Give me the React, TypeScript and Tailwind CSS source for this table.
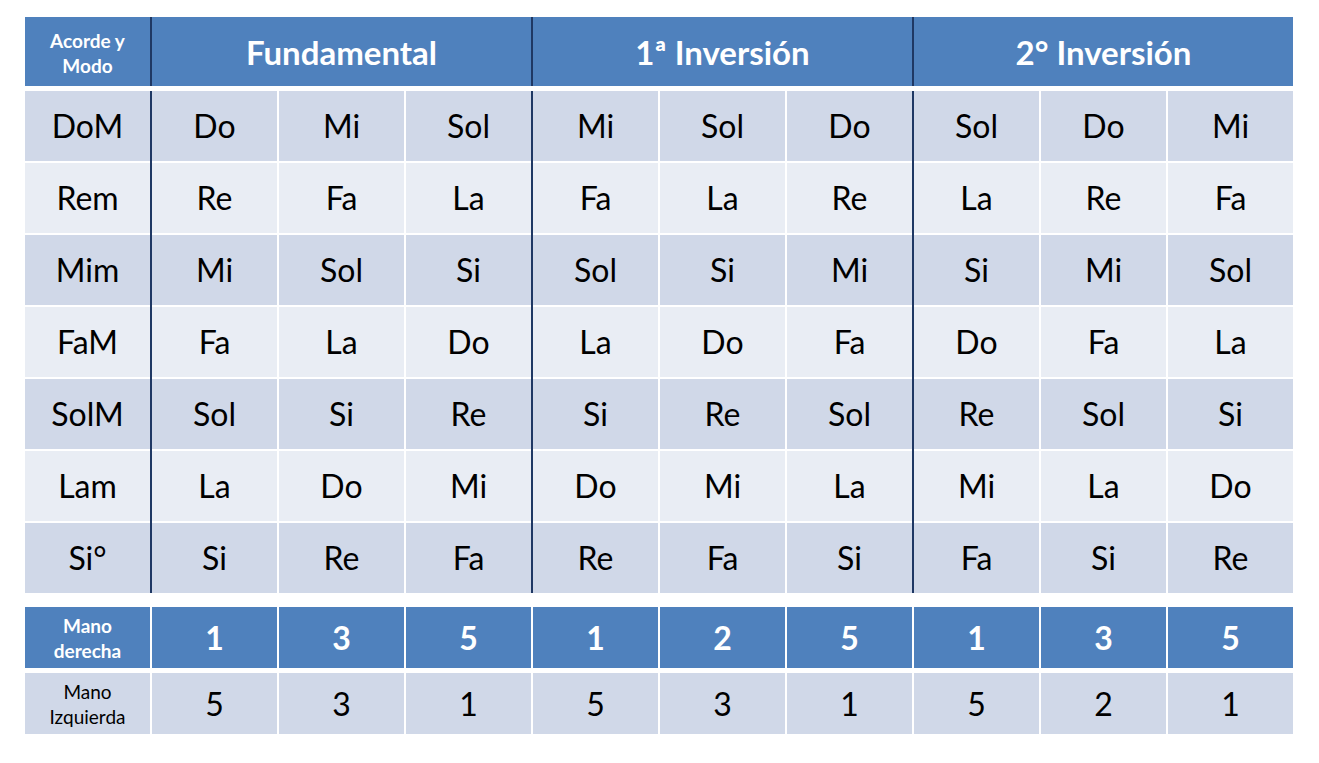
import React from 'react';

type Row = { chord: string; groups: string[][] };

const rows: Row[] = [
    { chord: 'DoM', groups: [['Do', 'Mi', 'Sol'], ['Mi', 'Sol', 'Do'], ['Sol', 'Do', 'Mi']] },
    { chord: 'Rem', groups: [['Re', 'Fa', 'La'], ['Fa', 'La', 'Re'], ['La', 'Re', 'Fa']] },
    { chord: 'Mim', groups: [['Mi', 'Sol', 'Si'], ['Sol', 'Si', 'Mi'], ['Si', 'Mi', 'Sol']] },
    { chord: 'FaM', groups: [['Fa', 'La', 'Do'], ['La', 'Do', 'Fa'], ['Do', 'Fa', 'La']] },
    { chord: 'SolM', groups: [['Sol', 'Si', 'Re'], ['Si', 'Re', 'Sol'], ['Re', 'Sol', 'Si']] },
    { chord: 'Lam', groups: [['La', 'Do', 'Mi'], ['Do', 'Mi', 'La'], ['Mi', 'La', 'Do']] },
    { chord: 'Si°', groups: [['Si', 'Re', 'Fa'], ['Re', 'Fa', 'Si'], ['Fa', 'Si', 'Re']] },
];

const headers = ['Fundamental', '1ª Inversión', '2° Inversión'];
const rightHand = ['1', '3', '5', '1', '2', '5', '1', '3', '5'];
const leftHand = ['5', '3', '1', '5', '3', '1', '5', '2', '1'];

const band = (i: number) => (i % 2 === 0 ? 'bg-[#d0d8e8]' : 'bg-[#e9edf4]');

const Divider: React.FC = () => <div className="w-[2px] shrink-0 bg-[#1f3864]" />;

const App: React.FC = () => {
    return (
        <div
            className="w-[1319px] h-[763px] bg-white pt-[17px] pl-[25px]"
            style={{ fontFamily: 'Lato, "Open Sans", sans-serif' }}
        >
            <div className="w-[1268px] flex flex-col">
                {/* header */}
                <div className="flex h-[69px] bg-[#4f81bd] text-white font-bold">
                    <div className="w-[125px] flex items-center justify-center text-center text-[19px] leading-[25px] pt-[2px]">
                        Acorde y<br />Modo
                    </div>
                    {headers.map((h) => (
                        <React.Fragment key={h}>
                            <Divider />
                            <div className="w-[379px] flex items-center justify-center text-[33px] pt-[2px]">{h}</div>
                        </React.Fragment>
                    ))}
                </div>

                {/* body */}
                <div className="flex mt-[5px] text-[32px] text-black">
                    <div className="w-[125px] grid grid-rows-7 gap-y-[2px]">
                        {rows.map((r, i) => (
                            <div key={r.chord} className={`h-[70px] flex items-center justify-center ${band(i)}`}>
                                {r.chord}
                            </div>
                        ))}
                    </div>
                    {[0, 1, 2].map((g) => (
                        <React.Fragment key={g}>
                            <Divider />
                            <div className="w-[379px] grid grid-cols-3 gap-[2px]">
                                {rows.map((r, i) =>
                                    r.groups[g].map((n, j) => (
                                        <div
                                            key={`${i}-${j}`}
                                            className={`h-[70px] flex items-center justify-center ${band(i)}`}
                                        >
                                            {n}
                                        </div>
                                    ))
                                )}
                            </div>
                        </React.Fragment>
                    ))}
                </div>

                {/* hands */}
                <div className="grid grid-cols-10 gap-[2px] mt-[14px] h-[61px] bg-white">
                    <div className="bg-[#4f81bd] text-white font-bold text-[19px] leading-[25px] flex items-center justify-center text-center">
                        Mano<br />derecha
                    </div>
                    {rightHand.map((n, i) => (
                        <div key={i} className="bg-[#4f81bd] text-white font-bold text-[32px] flex items-center justify-center">
                            {n}
                        </div>
                    ))}
                </div>
                <div className="grid grid-cols-10 gap-[2px] mt-[5px] h-[61px]">
                    <div className="bg-[#d0d8e8] text-black text-[19px] leading-[25px] flex items-center justify-center text-center">
                        Mano<br />Izquierda
                    </div>
                    {leftHand.map((n, i) => (
                        <div key={i} className="bg-[#d0d8e8] text-black text-[32px] flex items-center justify-center">
                            {n}
                        </div>
                    ))}
                </div>
            </div>
        </div>
    );
};

export default App;
